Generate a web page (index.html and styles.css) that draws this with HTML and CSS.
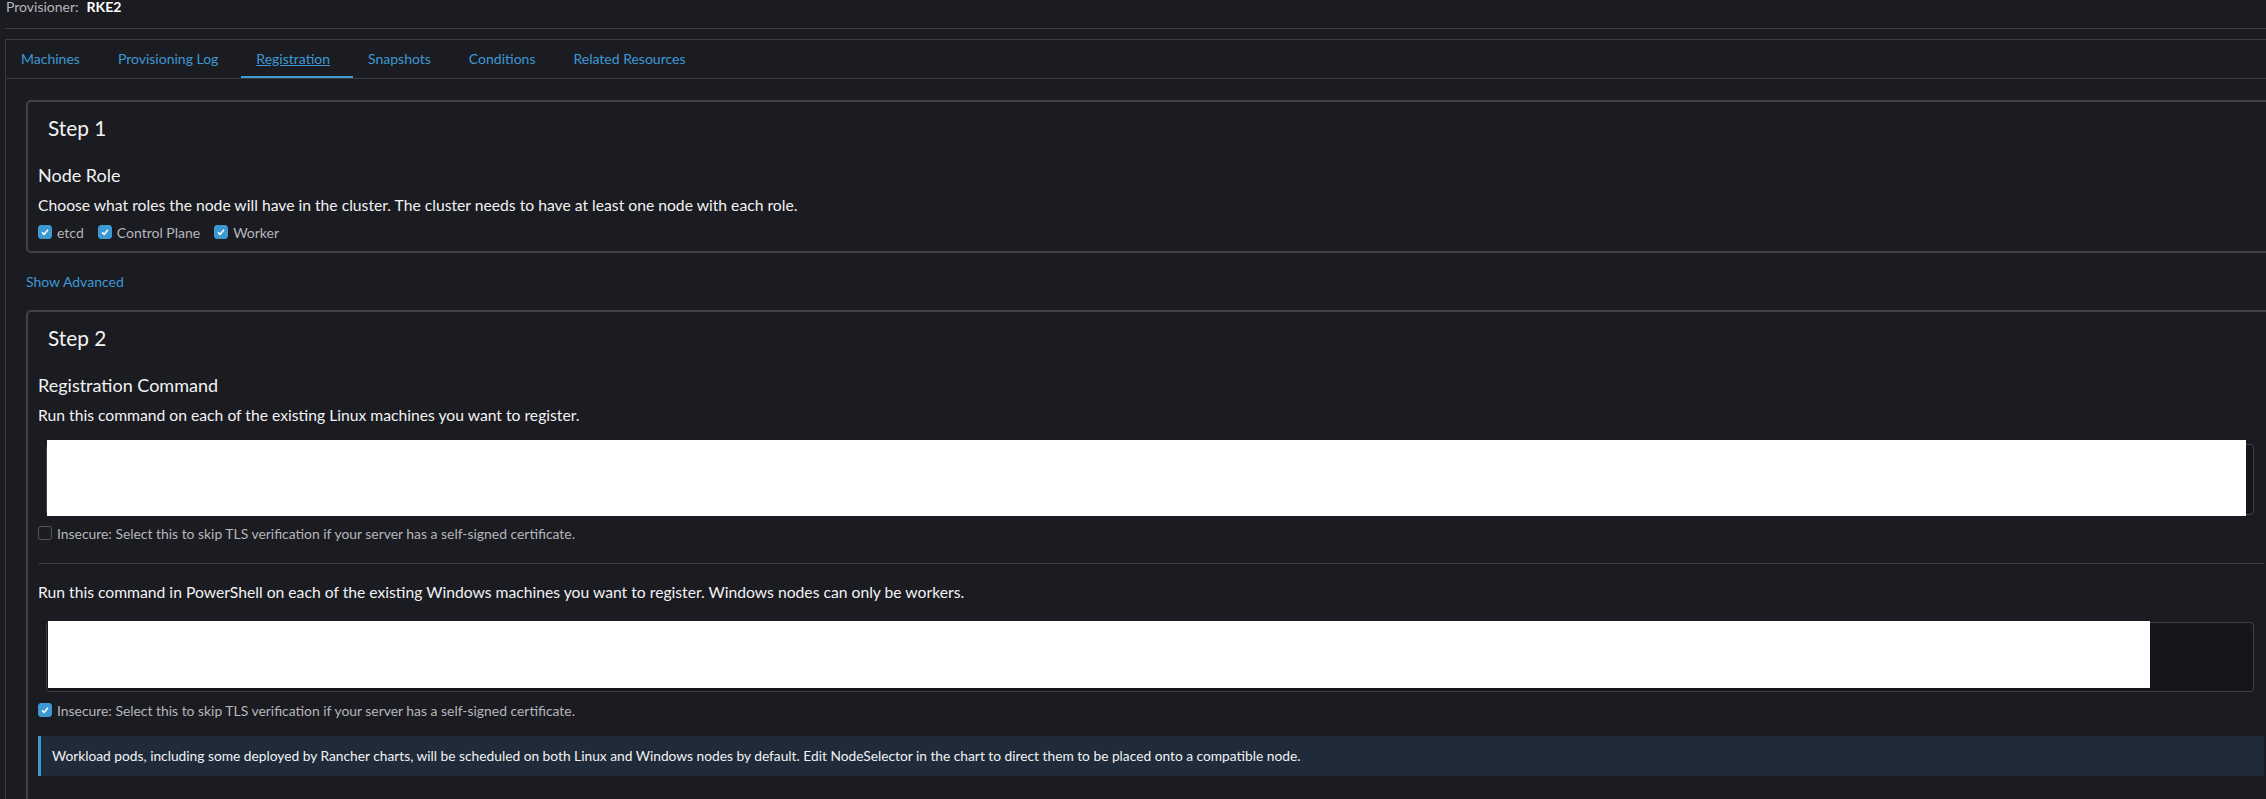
FILE: index.html
```html
<!DOCTYPE html>
<html lang="en">
<head>
    <meta charset="UTF-8">
    <title>Cluster - Registration</title>
    <link rel="stylesheet" href="styles.css">
</head>
<body>

<div class="provisioner">
    <span class="label">Provisioner:</span>
    <span class="value">RKE2</span>
</div>
<hr class="divider">

<div class="tabbed">
    <!-- Tab header -->
    <ul class="tabs">
        <li><a>Machines</a></li>
        <li><a>Provisioning Log</a></li>
        <li class="active"><a>Registration</a></li>
        <li><a>Snapshots</a></li>
        <li><a>Conditions</a></li>
        <li><a>Related Resources</a></li>
    </ul>

    <div class="tab-body">
        <!-- Step 1 -->
        <div class="step">
            <h2>Step 1</h2>
            <h3>Node Role</h3>
            <p>Choose what roles the node will have in the cluster. The cluster needs to have at least one node with each role.</p>
            <div class="checks">
                <label class="check"><span class="box checked"><svg viewBox="0 0 14 14"><polyline points="3.6,7.4 6,9.8 10.4,4.4"/></svg></span>etcd</label>
                <label class="check"><span class="box checked"><svg viewBox="0 0 14 14"><polyline points="3.6,7.4 6,9.8 10.4,4.4"/></svg></span>Control Plane</label>
                <label class="check"><span class="box checked"><svg viewBox="0 0 14 14"><polyline points="3.6,7.4 6,9.8 10.4,4.4"/></svg></span>Worker</label>
            </div>
        </div>

        <a class="advanced">Show Advanced</a>

        <!-- Step 2 -->
        <div class="step">
            <h2>Step 2</h2>
            <h3>Registration Command</h3>
            <p>Run this command on each of the existing Linux machines you want to register.</p>
            <div class="code code-linux"><div class="redact"></div></div>
            <label class="check insecure"><span class="box"></span>Insecure: Select this to skip TLS verification if your server has a self-signed certificate.</label>

            <div class="separator"></div>

            <p class="win">Run this command in PowerShell on each of the existing Windows machines you want to register. Windows nodes can only be workers.</p>
            <div class="code code-win"><div class="redact"></div></div>
            <label class="check insecure"><span class="box checked"><svg viewBox="0 0 14 14"><polyline points="3.6,7.4 6,9.8 10.4,4.4"/></svg></span>Insecure: Select this to skip TLS verification if your server has a self-signed certificate.</label>

            <div class="banner">Workload pods, including some deployed by Rancher charts, will be scheduled on both Linux and Windows nodes by default. Edit NodeSelector in the chart to direct them to be placed onto a compatible node.</div>
        </div>
    </div>
</div>

</body>
</html>
```

FILE: styles.css
```css
html, body {
    overflow: hidden;
}
body {
    margin: 0;
    background-color: #1b1c21;
    color: #e6e6e8;
    font-family: Lato, "Liberation Sans", sans-serif;
    font-size: 14px;
}
.provisioner {
    display: flex;
    gap: 8px;
    padding-left: 6px;
    line-height: 14px;
}
.provisioner .label {
    color: #b6b6bb;
}
.provisioner .value {
    color: #ffffff;
    font-weight: 700;
}
.divider {
    margin: 14px 0 0 5px;
    border: none;
    border-top: 1px solid #3a3b41;
}
.tabbed {
    margin: 10px 0 0 5px;
    width: calc(100% + 24px);
    border: 1px solid #3a3b41;
    border-right: none;
}
.tabs {
    display: flex;
    margin: 0;
    padding: 0;
    list-style: none;
    border-bottom: 1px solid #3a3b41;
}
.tabs li {
    height: 38px;
    line-height: 38px;
    padding: 0 23px 0 15px;
}
.tabs li a {
    color: #3d98d3;
}
.tabs li.active {
    box-shadow: inset 0 -2px 0 #3d98d3;
}
.tabs li.active a {
    text-decoration: underline;
}
.tab-body {
    padding: 21px 20px 20px 20px;
}
.step {
    border: 2px solid #414248;
    border-radius: 5px;
    padding: 14px 10px 10px 10px;
}
.step h2 {
    margin: 0 0 24px 0;
    padding-left: 10px;
    font-size: 20.8px;
    font-weight: 400;
    line-height: 24px;
    color: #f2f2f4;
}
.step h3 {
    margin: 0 0 9px 0;
    font-size: 18px;
    font-weight: 400;
    line-height: 22px;
    color: #f2f2f4;
}
.step p {
    margin: 0 0 8px 0;
    font-size: 15.7px;
    line-height: 20px;
    color: #f2f2f4;
}
.checks {
    display: flex;
    gap: 14px;
}
.check {
    display: flex;
    align-items: center;
    gap: 5px;
    height: 18px;
    color: #b6b6bb;
}
.box {
    flex-shrink: 0;
    width: 14px;
    height: 14px;
    box-sizing: border-box;
    border: 1px solid #55565c;
    border-radius: 3px;
}
.box.checked {
    background-color: #3d98d3;
    border-color: #3d98d3;
}
.box svg {
    display: block;
    width: 12px;
    height: 12px;
    fill: none;
    stroke: #ffffff;
    stroke-width: 1.8;
}
.advanced {
    display: block;
    margin: 21px 0 20px 0;
    line-height: 16px;
    color: #3d98d3;
}
.code {
    position: relative;
    margin: 19px 10px 0 8px;
    height: 71px;
    box-sizing: border-box;
    border: 1px solid #414248;
    border-radius: 4px;
    background-color: #16161a;
}
.redact {
    position: absolute;
    background-color: #ffffff;
}
.code-linux .redact {
    top: -5px;
    bottom: -2px;
    left: 0;
    right: 7px;
}
.code-win {
    margin-top: 20px;
    height: 70px;
}
.code-win .redact {
    top: -2px;
    bottom: 3px;
    left: 1px;
    right: 103px;
}
.insecure {
    margin-top: 9px;
    font-size: 13.9px;
}
.separator {
    margin-top: 21px;
    border-top: 1px solid #3a3b41;
}
.step p.win {
    margin: 18px 0 0 0;
}
.banner {
    margin: 17px 0 40px 0;
    height: 40px;
    line-height: 40px;
    padding-left: 11px;
    border-left: 3px solid #3d98d3;
    background-color: #1f2b39;
    color: #f2f2f4;
    font-size: 13.75px;
}
```
